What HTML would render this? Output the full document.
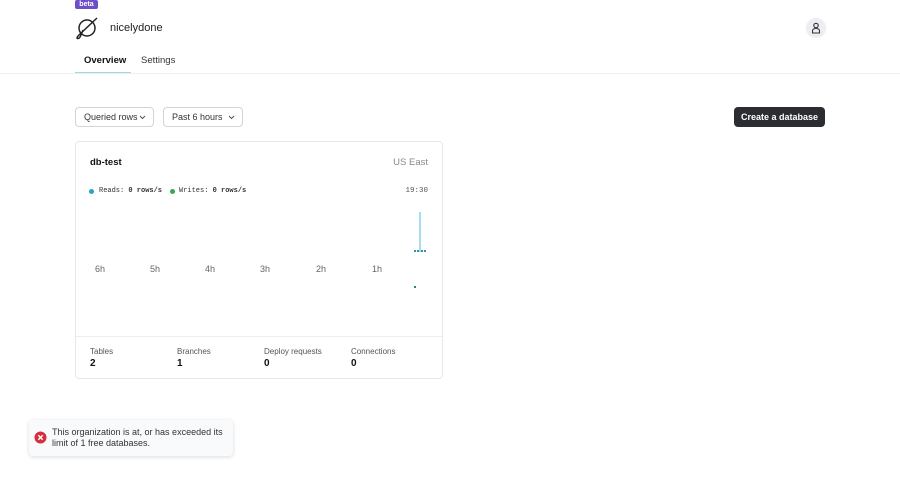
<!DOCTYPE html>
<html><head><meta charset="utf-8"><style>
*{box-sizing:border-box;margin:0;padding:0}
body{width:900px;height:484px;background:#fff;font-family:"Liberation Sans",sans-serif;color:#111;position:relative;overflow:hidden}
.a{position:absolute}
.mono{font-family:"Liberation Mono",monospace}
.btn{position:absolute;border:1px solid #d4d4d8;border-radius:4px;height:20px;font-size:9px;color:#333;display:flex;align-items:center;padding-left:8px;background:#fff}
.lbl{font-size:8px;color:#555}
.val{font-size:10px;font-weight:bold;color:#111}
.ax{font-size:9px;color:#666;top:264px}
</style></head><body>
<div class="a" style="left:75px;top:0;width:23px;height:9px;background:#6d4fc9;border-radius:2px;color:#fff;font-size:7px;font-weight:bold;text-align:center;line-height:9px">beta</div>
<svg class="a" style="left:74px;top:16px" width="24" height="24" viewBox="0 0 24 24" fill="none" stroke="#222" stroke-width="1.5"><circle cx="13" cy="12" r="8"/><path d="M23 2 L5 19 Q2 22 3.5 22.5 Q5.5 23 7 19 L9 14"/></svg>
<div class="a" style="left:110px;top:22px;font-size:11px;color:#222">nicelydone</div>
<div class="a" style="left:806px;top:18px;width:20px;height:20px;border-radius:50%;background:#eceef2"></div>
<svg class="a" style="left:811px;top:22px" width="10" height="12" viewBox="0 0 10 12" fill="none" stroke="#333" stroke-width="1.1"><circle cx="5" cy="3.5" r="2.2"/><path d="M1.5 11 V9 Q1.5 6.5 5 6.5 Q8.5 6.5 8.5 9 V11 Z"/></svg>
<div class="a" style="left:84px;top:55px;font-size:9.5px;font-weight:bold;color:#111">Overview</div>
<div class="a" style="left:141px;top:55px;font-size:9.5px;color:#333">Settings</div>
<div class="a" style="left:75px;top:72px;width:56px;height:2px;background:#9fd6e6"></div>
<div class="a" style="left:0;top:73px;width:900px;height:1px;background:#eeeff1"></div>
<div class="btn" style="left:75px;top:107px;width:79px">Queried rows<svg style="position:absolute;right:7px;top:7px" width="7" height="5" viewBox="0 0 7 5" fill="none" stroke="#555"><path d="M1 1l2.5 2.5L6 1"/></svg></div>
<div class="btn" style="left:163px;top:107px;width:80px">Past 6 hours<svg style="position:absolute;right:7px;top:7px" width="7" height="5" viewBox="0 0 7 5" fill="none" stroke="#555"><path d="M1 1l2.5 2.5L6 1"/></svg></div>
<div class="a" style="left:734px;top:107px;width:91px;height:20px;background:#2b2d33;border-radius:4px;color:#fff;font-size:9px;font-weight:bold;text-align:center;line-height:20px">Create a database</div>
<div class="a" style="left:75px;top:141px;width:368px;height:238px;border:1px solid #e6e7ea;border-radius:4px"></div>
<div class="a" style="left:90px;top:157px;font-size:9.5px;font-weight:bold">db-test</div>
<div class="a" style="left:360px;width:68px;text-align:right;top:157px;font-size:9.5px;color:#888">US East</div>
<div class="a" style="left:89px;top:189px;width:5px;height:5px;border-radius:50%;background:#2ba3c1"></div>
<div class="a mono" style="left:99px;top:187px;font-size:7px;color:#333;white-space:nowrap">Reads: <b>0 rows/s</b></div>
<div class="a" style="left:170px;top:189px;width:5px;height:5px;border-radius:50%;background:#3aa55a"></div>
<div class="a mono" style="left:179px;top:187px;font-size:7px;color:#333;white-space:nowrap">Writes: <b>0 rows/s</b></div>
<div class="a mono" style="left:400px;width:28px;text-align:right;top:187px;font-size:7.5px;color:#555">19:30</div>
<div class="a" style="left:419px;top:212px;width:2px;height:40px;background:#a8dcef"></div>
<div class="a" style="left:414px;top:250px;width:12px;height:2px;border-top:2px dotted #3a8fb0"></div>
<div class="a" style="left:414px;top:286px;width:2px;height:2px;background:#2d8a60"></div>
<div class="a ax" style="left:95px">6h</div><div class="a ax" style="left:150px">5h</div><div class="a ax" style="left:205px">4h</div><div class="a ax" style="left:260px">3h</div><div class="a ax" style="left:316px">2h</div><div class="a ax" style="left:372px">1h</div>
<div class="a" style="left:76px;top:336px;width:366px;height:1px;background:#eceef0"></div>
<div class="a" style="left:90px;top:347px"><div class="lbl">Tables</div><div class="val" style="margin-top:2px">2</div></div>
<div class="a" style="left:177px;top:347px"><div class="lbl">Branches</div><div class="val" style="margin-top:2px">1</div></div>
<div class="a" style="left:264px;top:347px"><div class="lbl">Deploy requests</div><div class="val" style="margin-top:2px">0</div></div>
<div class="a" style="left:351px;top:347px"><div class="lbl">Connections</div><div class="val" style="margin-top:2px">0</div></div>
<div class="a" style="left:29px;top:420px;width:204px;height:36px;background:#f9fafb;border-radius:4px;box-shadow:0 1px 4px rgba(0,0,0,.15)"></div>
<svg class="a" style="left:34px;top:431px" width="13" height="13" viewBox="0 0 13 13"><circle cx="6.5" cy="6.5" r="6" fill="#d52f3f"/><path d="M4.3 4.3l4.4 4.4M8.7 4.3l-4.4 4.4" stroke="#fff" stroke-width="1.4"/></svg>
<div class="a" style="left:52px;top:427px;font-size:9px;color:#333;line-height:11px;width:180px;white-space:nowrap">This organization is at, or has exceeded its<br>limit of 1 free databases.</div>
</body></html>
